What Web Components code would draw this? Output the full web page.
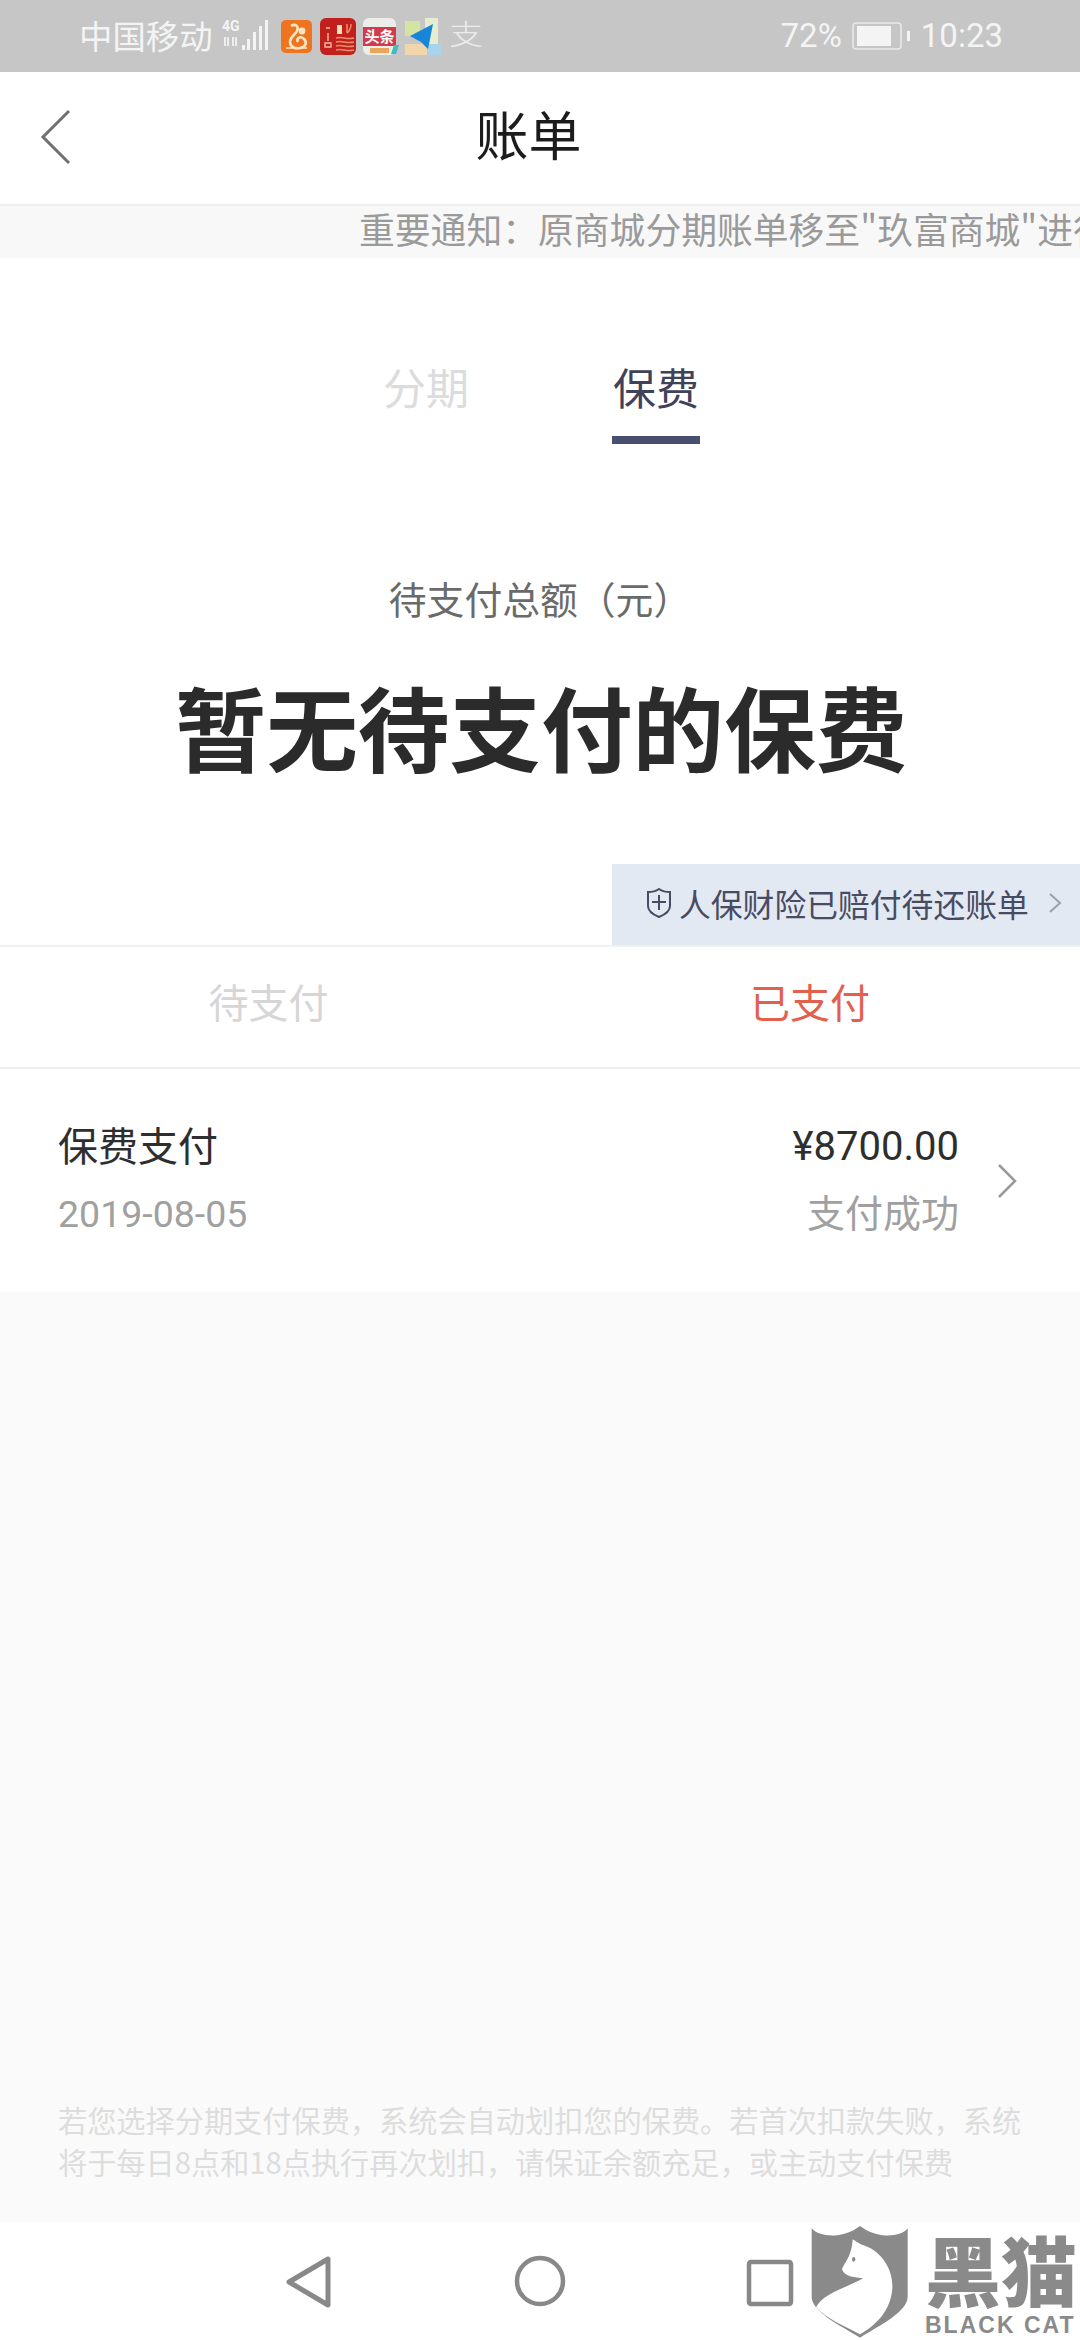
<!DOCTYPE html>
<html lang="zh">
<head>
<meta charset="utf-8">
<title>账单</title>
<style>
  html, body { margin: 0; padding: 0; }
  body {
    width: 1080px; height: 2340px; overflow: hidden;
    font-family: "Noto Sans CJK SC", "Roboto", sans-serif;
    background: #fafafa;
  }
</style>
</head>
<body>
<bill-page>
  <status-bar></status-bar>
  <title-bar>账单</title-bar>
  <notice-bar>重要通知：原商城分期账单移至"玖富商城"进行还款</notice-bar>
  <summary-panel></summary-panel>
  <pay-tabs></pay-tabs>
  <bill-row></bill-row>
  <bill-tip>若您选择分期支付保费，系统会自动划扣您的保费。若首次扣款失败，系统将于每日8点和18点执行再次划扣，请保证余额充足，或主动支付保费</bill-tip>
  <nav-keys></nav-keys>
</bill-page>
<script>
const define = (name, html) => {
  customElements.define(name, class extends HTMLElement {
    constructor() {
      super();
      const template = document.createElement("template");
      template.innerHTML = html;
      this.attachShadow({ mode: "open" }).appendChild(template.content.cloneNode(true));
    }
  });
};

define("bill-page", /* html */ `
  <style>
    :host { display: flex; flex-direction: column; height: 2340px; position: relative; }
  </style>
  <slot></slot>`);

define("status-bar", /* html */ `
  <style>
    :host {
      display: flex; align-items: center; height: 72px; flex: none; box-sizing: border-box;
      padding: 0 0 0 79px; background: #c6c6c6; color: #f4f4f4; font-size: 33.4px;
    }
    .ico { display: block; flex: none; }
    .carrier { width: 133px; white-space: nowrap; line-height: 72px; margin-top: -2px; }
    .num { font-family: "Roboto", sans-serif; font-size: 33px; margin-top: -2px; }
    .right { margin-left: auto; display: flex; align-items: center; padding-right: 77px; }
    .pay { margin: -6px 0 0 8px; font-size: 34px; font-weight: 300; color: #ececec; transform: scaleY(.82); }
  </style>
  <span class="carrier">中国移动</span>
  <svg class="ico" style="margin:-2px 0 0 10px" width="47" height="32" viewBox="0 0 47 32">
    <text x="0" y="12" font-family="Roboto" font-size="14" font-weight="700" fill="#f4f4f4">4G</text>
    <g fill="#f4f4f4">
      <path d="M2 18v9h2v-9zM5 18v9h2v-9zM10 18v9h2v-9zM13 18v9h2v-9z" opacity=".85"/>
      <rect x="20" y="26" width="3" height="5"/><rect x="25" y="20" width="3" height="11"/>
      <rect x="31" y="13" width="3" height="18"/><rect x="37" y="7" width="3" height="24"/>
      <rect x="43" y="1" width="3" height="30"/>
    </g>
  </svg>
  <svg class="ico" style="margin-left:12px" width="31" height="33" viewBox="0 0 31 33">
    <rect width="31" height="33" rx="5" fill="#ee7420"/>
    <path d="M10 6c5-3 8 1 6 5s-7 6-7 11 5 7 10 6 8-5 4-9-8 0-6 3" fill="none" stroke="#fbe6c4" stroke-width="2.6"/>
    <circle cx="21" cy="11" r="3.4" fill="#fbe6c4"/>
    <path d="M5 28h21" stroke="#fbe6c4" stroke-width="1.5"/>
  </svg>
  <svg class="ico" style="margin-left:8px" width="36" height="37" viewBox="0 0 36 37">
    <rect width="36" height="37" rx="6" fill="#c2201c"/>
    <rect x="17" y="7" width="5" height="9" fill="#f6e2b8"/>
    <g fill="none" stroke="#eb8d6c" stroke-width="1.5">
      <path d="M16 20c6-2 10 2 18 0M16 24c6-2 10 2 18 0M16 28c6-2 10 2 18 0M16 32c6-2 10 2 18 0"/>
      <path d="M27 6v9M31 6c0 4-2 8-4 9"/>
    </g>
    <path d="M6 10h4M5 25h6v4H5zM8 15v8" stroke="#eeb9a0" stroke-width="1.4" fill="none"/>
  </svg>
  <svg class="ico" style="margin-left:7px" width="36" height="37" viewBox="0 0 36 37">
    <rect x="0" y="0" width="33" height="37" rx="6" fill="#ebeee9"/>
    <rect x="0" y="9" width="33" height="19" fill="#d33a4c"/>
    <text x="16.5" y="24" text-anchor="middle" font-size="15" font-weight="700" fill="#fff">头条</text>
    <rect x="7" y="30" width="19" height="5" fill="#eca35a"/>
    <path d="M31 27h5l-3 9h-5z" fill="#3fbcc4"/>
  </svg>
  <svg class="ico" style="margin-left:6px" width="36" height="37" viewBox="0 0 36 37">
    <rect x="0" y="3" width="15" height="15" fill="#d5e3a3"/>
    <rect x="20" y="0" width="13" height="26" fill="#e6ecd0"/>
    <rect x="0" y="26" width="22" height="11" fill="#f0d6a8"/>
    <rect x="23" y="26" width="13" height="11" fill="#a9d2ec"/>
    <path d="M5 18 28 6 23 31 16 24z" fill="#1786d8"/>
  </svg>
  <span class="pay">支</span>
  <div class="right">
    <span class="num">72%</span>
    <svg class="ico" style="margin:0 10px" width="59" height="28" viewBox="0 0 59 28">
      <rect x="1" y="1" width="48" height="26" rx="3" fill="none" stroke="#e9e9e9" stroke-width="1.6"/>
      <rect x="5" y="4" width="34" height="20" fill="#f4f4f4"/>
      <rect x="55" y="9" width="3" height="10" fill="#f4f4f4"/>
    </svg>
    <span class="num">10:23</span>
  </div>`);

define("title-bar", /* html */ `
  <style>
    :host {
      display: flex; align-items: center; justify-content: center; position: relative;
      height: 134px; flex: none; background: #fff; color: #1c1c1c; font-size: 53px;
      box-sizing: border-box; border-bottom: 2px solid #eeeeee;
      padding: 0 23px 10px 0;
    }
    svg { position: absolute; left: 40px; top: 37px; }
  </style>
  <svg width="32" height="56" viewBox="0 0 32 56">
    <path d="M29 2 3 28l26 26" fill="none" stroke="#707070" stroke-width="3"/>
  </svg>
  <slot></slot>`);

define("notice-bar", /* html */ `
  <style>
    :host {
      display: block; height: 52px; flex: none; overflow: hidden; white-space: nowrap;
      box-sizing: border-box; padding-left: 359px; background: #f8f8f8; color: #9a9a9a;
      font-size: 35.8px; line-height: 44px;
    }
  </style>
  <slot></slot>`);

define("summary-panel", /* html */ `
  <style>
    :host { display: block; height: 687px; flex: none; background: #fff; position: relative; box-sizing: border-box; padding-top: 99px; }
    .tabs { display: flex; justify-content: center; gap: 142px; padding-left: 2px; font-size: 43px; }
    .tab { width: 88px; text-align: center; white-space: nowrap; line-height: 58px; padding-bottom: 21px; border-bottom: 8px solid transparent; color: #dcdcdc; }
    .tab.on { color: #40425a; border-bottom-color: #4a4e6e; }
    .sub { margin-top: 129px; text-align: center; font-size: 37.8px; line-height: 50px; color: #6a6a6a; }
    .big { margin-top: 37px; text-align: center; padding-left: 2px; font-size: 91.6px; line-height: 130px; font-weight: 700; color: #2b2b2b; }
    .claim {
      position: absolute; right: 0; bottom: 0; left: 612px; height: 81px; box-sizing: border-box;
      display: flex; align-items: center; padding: 0 0 4px 34px; background: #e3e9f3;
      color: #484c63; font-size: 31.8px; white-space: nowrap;
    }
    .claim svg { flex: none; display: block; }
  </style>
  <div class="tabs">
    <div class="tab">分期</div>
    <div class="tab on">保费</div>
  </div>
  <div class="sub">待支付总额（元）</div>
  <div class="big">暂无待支付的保费</div>
  <div class="claim">
    <svg style="margin-right:7px" width="26" height="32" viewBox="0 0 26 32">
      <path d="M2 5c4 0 8-1 11-3 3 2 7 3 11 3v14c0 5-6 9-11 11C8 28 2 24 2 19z" fill="none" stroke="#484c63" stroke-width="2"/>
      <path d="M13 8v15M6 15h14" fill="none" stroke="#484c63" stroke-width="2"/>
    </svg>
    <span>人保财险已赔付待还账单</span>
    <svg style="margin-left:19px" width="14" height="22" viewBox="0 0 14 22">
      <path d="M2 2l10 9-10 9" fill="none" stroke="#9aa0ae" stroke-width="2"/>
    </svg>
  </div>`);

define("pay-tabs", /* html */ `
  <style>
    :host {
      display: grid; grid-template-columns: 537px 1fr; height: 124px; flex: none; background: #fff;
      box-sizing: border-box; border-top: 2px solid #f1f1f1; border-bottom: 2px solid #eeeeee;
      font-size: 40px; line-height: 109px; text-align: center;
    }
    .off { color: #d6d6d6; }
    .on { color: #e2604e; padding-left: 3px; }
  </style>
  <div class="off">待支付</div>
  <div class="on">已支付</div>`);

define("bill-row", /* html */ `
  <style>
    :host {
      display: flex; justify-content: space-between; align-items: center; height: 223px; flex: none;
      box-sizing: border-box; padding: 0 63px 0 58px; background: #fff;
    }
    .col { display: flex; flex-direction: column; gap: 11px; }
    .col.r { align-items: flex-end; margin-left: auto; }
    .main { font-size: 40px; line-height: 56px; color: #2e2e2e; }
    .amt { font-family: "Roboto", sans-serif; font-size: 40px; }
    .sec { font-size: 38px; line-height: 56px; color: #a0a0a0; }
    .date { font-family: "Roboto", sans-serif; font-size: 37.5px; }
    .cjk { line-height: 50px; padding-bottom: 6px; }
    svg { display: block; margin-left: 38px; }
  </style>
  <div class="col">
    <div class="main cjk">保费支付</div>
    <div class="sec date">2019-08-05</div>
  </div>
  <div class="col r">
    <div class="main amt">¥8700.00</div>
    <div class="sec cjk">支付成功</div>
  </div>
  <svg width="20" height="36" viewBox="0 0 20 36">
    <path d="M2 2l16 16L2 34" fill="none" stroke="#9a9a9a" stroke-width="2.5"/>
  </svg>`);

define("bill-tip", /* html */ `
  <style>
    :host {
      display: flex; flex-direction: column; justify-content: flex-end; flex: 1; box-sizing: border-box;
      padding: 0 50px 40px 58px; color: #dddddd; font-size: 29.2px; line-height: 42px;
    }
  </style>
  <div><slot></slot></div>`);

define("nav-keys", /* html */ `
  <style>
    :host { display: block; height: 118px; flex: none; background: #fff; position: relative; }
    svg { position: absolute; }
    .cn { position: absolute; left: 925px; top: 8px; font-size: 76px; line-height: 76px; font-weight: 900; color: #8a8a8a; white-space: nowrap; }
    .en { position: absolute; left: 925px; top: 89px; font-family: "Liberation Sans", sans-serif; font-weight: 700; font-size: 23px; line-height: 28px; letter-spacing: 2px; color: #8a8a8a; white-space: nowrap; }
  </style>
  <svg style="left:286px;top:34px" width="46" height="52" viewBox="0 0 46 52">
    <path d="M42 3 3 26l39 23z" fill="none" stroke="#888" stroke-width="5" stroke-linejoin="round"/>
  </svg>
  <svg style="left:514px;top:33px" width="52" height="52" viewBox="0 0 52 52">
    <circle cx="26" cy="26" r="23" fill="none" stroke="#888" stroke-width="4.5"/>
  </svg>
  <svg style="left:746px;top:37px" width="48" height="48" viewBox="0 0 48 48">
    <rect x="3" y="3" width="42" height="42" rx="2" fill="none" stroke="#888" stroke-width="4.5"/>
  </svg>
  <svg style="left:810px;top:0" width="100" height="118" viewBox="90 66 300 354">
    <path d="M95 85C115 110 185 120 240 78 295 120 365 110 383 85V290C383 335 300 375 240 413 180 375 95 335 95 290Z" fill="#8a8a8a"/>
    <path d="M218 118 242 133C305 150 340 210 337 265 333 330 290 375 240 403 195 378 140 358 108 322 130 280 185 270 250 235 225 232 195 232 186 208 195 185 215 170 218 118Z" fill="#fff"/>
    <ellipse cx="221" cy="178" rx="5" ry="7" fill="#8a8a8a"/>
  </svg>
  <div class="cn">黑猫</div>
  <div class="en">BLACK CAT</div>`);
</script>
</body>
</html>
